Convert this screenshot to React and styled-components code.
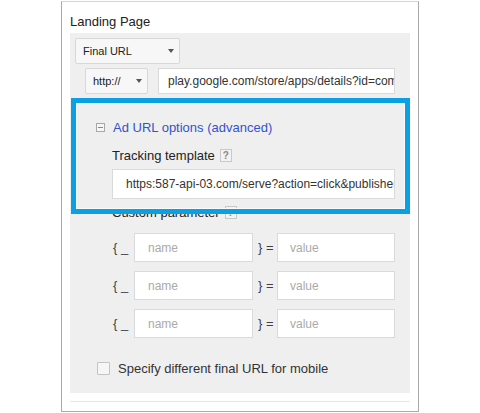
import React from "react";
import styled, { createGlobalStyle } from "styled-components";

const GlobalStyle = createGlobalStyle`
  html, body { margin: 0; padding: 0; background: #fff; }
  body { font-family: "Liberation Sans", Arial, sans-serif; }
`;

const Frame = styled.div`
  box-sizing: border-box;
  width: 358px;
  margin: 1px 0 0 61px;
  border: 1px solid #a9a9a9;
  border-top-color: #d4d4d4;
  padding: 0 8px 9px;
`;

const Title = styled.div`
  font-size: 13px;
  line-height: 15px;
  color: #222;
  padding-top: 12px;
  margin-bottom: 4px;
`;

const Panel = styled.div`
  position: relative;
  background: #efefef;
  padding: 5px 0 17px;
  display: flex;
  flex-direction: column;
  align-items: flex-start;
`;

const Select = styled.div`
  box-sizing: border-box;
  width: ${(p) => p.$width}px;
  height: 26px;
  margin-left: ${(p) => p.$indent || 0}px;
  border: 1px solid #d8d8d8;
  border-radius: 2px;
  background: #f7f7f7;
  font-size: 11px;
  color: #222;
  display: flex;
  align-items: center;
  justify-content: space-between;
  padding: 0 5px 0 7px;
`;

const Caret = styled.span`
  width: 0;
  height: 0;
  border-left: 3px solid transparent;
  border-right: 3px solid transparent;
  border-top: 4px solid #555;
`;

const UrlRow = styled.div`
  display: flex;
  gap: 10px;
  margin: 4px 0 0 15px;
`;

const Field = styled.input`
  box-sizing: border-box;
  width: ${(p) => p.$width}px;
  height: ${(p) => p.$height}px;
  margin: 0;
  border: 1px solid #dadada;
  border-radius: 0;
  background: #fff;
  font-family: "Liberation Sans", Arial, sans-serif;
  font-size: 12px;
  color: #333;
  padding: 0 0 0 ${(p) => p.$pad}px;
  outline: none;
  &::placeholder {
    color: #aaa;
    opacity: 1;
  }
`;

const Toggle = styled.div`
  display: flex;
  align-items: center;
  gap: 8px;
  margin: 26px 0 0 26px;
  font-size: 13px;
  line-height: 15px;
  color: #3552cc;
`;

const Collapse = styled.span`
  box-sizing: border-box;
  position: relative;
  width: 9px;
  height: 9px;
  border: 1px solid #a8a8a8;
  background: #f6f6f6;
  &::after {
    content: "";
    position: absolute;
    left: 1px;
    right: 1px;
    top: 3px;
    height: 1px;
    background: #888;
  }
`;

const Section = styled.div`
  margin-left: 42px;
  display: flex;
  flex-direction: column;
  align-items: flex-start;
`;

const Label = styled.div`
  display: flex;
  align-items: center;
  gap: 5px;
  margin-top: ${(p) => p.$top}px;
  font-size: 13px;
  line-height: 15px;
  color: #222;
`;

const Help = styled.span`
  box-sizing: border-box;
  width: 12px;
  height: 13px;
  border: 1px solid #c9c9c9;
  background: #f2f2f2;
  color: #888;
  font-size: 10px;
  font-weight: bold;
  line-height: 11px;
  text-align: center;
`;

const Gap = styled.div`
  margin-top: ${(p) => p.$top}px;
`;

const Params = styled.div`
  display: flex;
  flex-direction: column;
  gap: 9px;
  margin-top: 13px;
`;

const ParamRow = styled.div`
  display: flex;
  align-items: center;
`;

const Token = styled.span`
  box-sizing: border-box;
  width: ${(p) => p.$width}px;
  padding-left: ${(p) => p.$pad || 0}px;
  font-size: 13px;
  color: #3a3f4a;
  white-space: pre;
`;

const CheckRow = styled.div`
  display: flex;
  align-items: center;
  gap: 8px;
  margin: 23px 0 0 27px;
  font-size: 13px;
  line-height: 15px;
  color: #333;
`;

const Checkbox = styled.span`
  box-sizing: border-box;
  width: 13px;
  height: 13px;
  border: 1px solid #c4c4c4;
  border-radius: 1px;
  background: #f6f6f6;
`;

const Divider = styled.div`
  height: 1px;
  margin-top: 8px;
  background: #e6e6e6;
`;

const Highlight = styled.div`
  position: absolute;
  left: 1px;
  top: 65px;
  width: 339px;
  height: 116px;
  box-sizing: border-box;
  border: 5px solid #0aa0e4;
  box-shadow: inset 0 0 0 1px #fafafa;
  pointer-events: none;
`;

export default function App() {
  const rows = [0, 1, 2];
  return (
    <>
      <GlobalStyle />
      <Frame>
        <Title>Landing Page</Title>
        <Panel>
          <Select $width={105} $indent={5}>
            <span>Final URL</span>
            <Caret />
          </Select>
          <UrlRow>
            <Select $width={63}>
              <span>http://</span>
              <Caret />
            </Select>
            <Field
              $width={237}
              $height={26}
              $pad={9}
              readOnly
              value="play.google.com/store/apps/details?id=com.example.app"
            />
          </UrlRow>
          <Toggle>
            <Collapse />
            <span>Ad URL options (advanced)</span>
          </Toggle>
          <Section>
            <Label $top={13}>
              Tracking template <Help>?</Help>
            </Label>
            <Gap $top={6}>
              <Field
                $width={283}
                $height={30}
                $pad={13}
                readOnly
                value="https:587-api-03.com/serve?action=click&publisher=1234"
              />
            </Gap>
            <Label $top={6}>
              Custom parameter <Help>?</Help>
            </Label>
          </Section>
          <Section>
            <Params>
              {rows.map((r) => (
                <ParamRow key={r}>
                  <Token $width={22} $pad={1}>{"{ _"}</Token>
                  <Field $width={119} $height={29} $pad={13} placeholder="name" />
                  <Token $width={24} $pad={5}>{"} ="}</Token>
                  <Field $width={118} $height={29} $pad={12} placeholder="value" />
                </ParamRow>
              ))}
            </Params>
          </Section>
          <CheckRow>
            <Checkbox />
            <span>Specify different final URL for mobile</span>
          </CheckRow>
          <Highlight />
        </Panel>
        <Divider />
      </Frame>
    </>
  );
}
